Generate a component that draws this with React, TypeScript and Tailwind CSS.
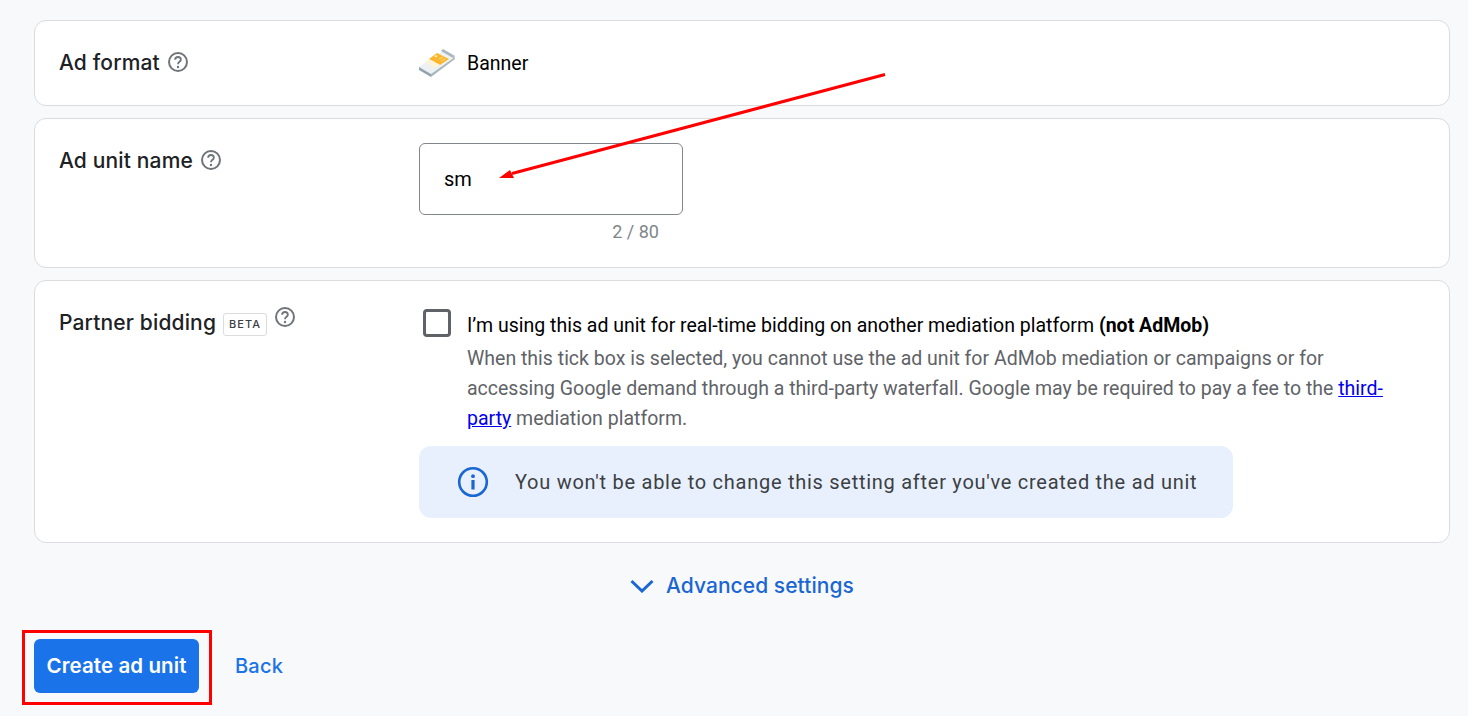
import React from 'react';

const HelpIcon = () => (
  <svg width="22" height="22" viewBox="0 0 24 24" fill="none" className="shrink-0">
    <circle cx="12" cy="12" r="9.8" stroke="#70757a" strokeWidth="2.2" />
    <path d="M8.9 9.6a3.1 3.1 0 0 1 6.2 0c0 2.2-3.1 2.3-3.1 4.8" stroke="#70757a" strokeWidth="2" fill="none" />
    <circle cx="12" cy="17.4" r="1.3" fill="#70757a" />
  </svg>
);

const BannerIcon = () => (
  <svg width="38" height="30" viewBox="0 0 38 30" className="shrink-0 -ml-px">
    <path d="M1 19 L25 3 L37 9 L13 26 Z" fill="#eef1f2" />
    <path d="M1 19 L13 26 L13 29 L1 22 Z" fill="#90a4ae" />
    <path d="M13 26 L37 9 L37 11 L13 29 Z" fill="#a9b8bf" />
    <path d="M25 1 L37 8 L35 10 L23 3 Z" fill="#a9b8bf" />
    <path d="M11 11 L19 5 L31 11 L22 17 Z" fill="#fbb72c" />
    <path d="M16 8 L18 7 L20 8 L18 9.5 Z" fill="#fde7a8" />
    <path d="M21 11 L25 9 M23 13 L27 11" stroke="#fde7a8" strokeWidth="0.8" />
    <path d="M11 11 L22 17 L17 20 L7 14 Z" fill="#fdf3d6" />
  </svg>
);

const headingFont = "font-['Inter',sans-serif]";

const Label = ({ children }: { children: React.ReactNode }) => (
  <span className={`${headingFont} text-[21px] leading-[28px] font-medium tracking-[0.15px] text-[#202124]`}>{children}</span>
);

export default function App() {
  return (
    <div className="relative h-[716px] w-[1468px] overflow-hidden bg-[#f8f9fa] font-['Roboto',sans-serif]">
      <div className="flex flex-col gap-3 pt-5 pl-[34px] pr-[18px]">
        {/* Ad format */}
        <section className="flex h-[86px] rounded-xl border border-[#dadce0] bg-white">
          <div className="flex w-[384px] items-start gap-[7px] pl-6 pt-7">
            <Label>Ad format</Label>
            <span className="mt-[2px]"><HelpIcon /></span>
          </div>
          <div className="flex items-start gap-[11px] pt-[27px]">
            <BannerIcon />
            <span className="mt-px text-[19.5px] leading-[30px] text-black">Banner</span>
          </div>
        </section>

        {/* Ad unit name */}
        <section className="flex h-[150px] rounded-xl border border-[#dadce0] bg-white">
          <div className="flex w-[384px] items-start gap-[7px] pl-6 pt-7">
            <Label>Ad unit name</Label>
            <span className="mt-[2px]"><HelpIcon /></span>
          </div>
          <div className="pt-6">
            <div className="flex h-[72px] w-[264px] items-center rounded-md border border-[#80868b] pl-6 text-[20px] text-black">sm</div>
            <div className="mt-[7px] pr-6 text-right text-[18px] leading-5 text-[#80868b]">2 / 80</div>
          </div>
        </section>

        {/* Partner bidding */}
        <section className="flex h-[263px] rounded-xl border border-[#dadce0] bg-white">
          <div className="flex w-[384px] items-start pl-6 pt-7">
            <Label>Partner bidding</Label>
            <span className={`${headingFont} ml-[7px] mt-1 flex h-[23px] w-[44px] items-center justify-center rounded-[3px] border border-[#dadce0] text-[11px] font-medium tracking-[1px] text-[#3c4043]`}>BETA</span>
            <span className="ml-[7px] mt-[-3px]"><HelpIcon /></span>
          </div>
          <div className="w-[1010px]">
            <div className="flex pl-1">
              <div className="mt-[28px] h-7 w-7 shrink-0 rounded-[4px] border-[3px] border-[#5f6368]" />
              <div className="ml-4 mt-[30px] w-[920px] text-[19.5px] leading-[30px]">
                <p className="mb-[3px] text-black">I’m using this ad unit for real-time bidding on another mediation platform <b className="font-bold">(not AdMob)</b></p>
                <p className="text-[#5f6368]">
                  When this tick box is selected, you cannot use the ad unit for AdMob mediation or campaigns or for accessing Google demand through a third-party waterfall. Google may be required to pay a fee to the <a href="#" className="text-[#0000ee] underline">third-party</a> mediation platform.
                </p>
              </div>
            </div>
            <div className="mt-3 flex h-[72px] w-[814px] items-center rounded-xl bg-[#e8f0fe] pl-[38px]">
              <svg width="32" height="32" viewBox="0 0 32 32" fill="none" className="shrink-0">
                <circle cx="16" cy="16" r="13.8" stroke="#1a66d2" strokeWidth="2.6" />
                <rect x="14.4" y="14" width="3.2" height="9.5" fill="#1a66d2" />
                <circle cx="16" cy="10.2" r="1.9" fill="#1a66d2" />
              </svg>
              <span className="ml-[26px] text-[20px] tracking-[0.73px] text-[#3c4043]">You won't be able to change this setting after you've created the ad unit</span>
            </div>
          </div>
        </section>
      </div>

      {/* Advanced settings */}
      <div className="mt-[28px] ml-[630px] flex items-center gap-3">
        <svg width="24" height="14" viewBox="0 0 24 14" fill="none" className="shrink-0">
          <path d="M1.5 2 L12 12 L22.5 2" stroke="#1a66d2" strokeWidth="3" />
        </svg>
        <span className={`${headingFont} pt-px text-[21px] leading-[28px] font-medium tracking-[0.05px] text-[#1a66d2]`}>Advanced settings</span>
      </div>

      {/* Footer actions */}
      <div className="mt-[39px] ml-[34px] flex items-center gap-9">
        <button className={`${headingFont} h-[54px] w-[165px] rounded-md bg-[#1a73e8] text-[20.5px] font-semibold tracking-[0.1px] text-white`}>Create ad unit</button>
        <a href="#" className={`${headingFont} text-[20px] font-medium tracking-[0.2px] text-[#1a73e8]`}>Back</a>
      </div>

      {/* Annotations drawn on top of the screenshot */}
      <div className="absolute left-[22px] top-[630px] h-[75px] w-[190px] border-[3px] border-[#ff0000]" />
      <svg className="absolute left-0 top-0 pointer-events-none" width="1468" height="716" fill="none">
        <line x1="885" y1="74.5" x2="512" y2="173.5" stroke="#ff0000" strokeWidth="3" />
        <path d="M499 178 L510 170 L514 178 Z" fill="#ff0000" />
      </svg>
    </div>
  );
}
